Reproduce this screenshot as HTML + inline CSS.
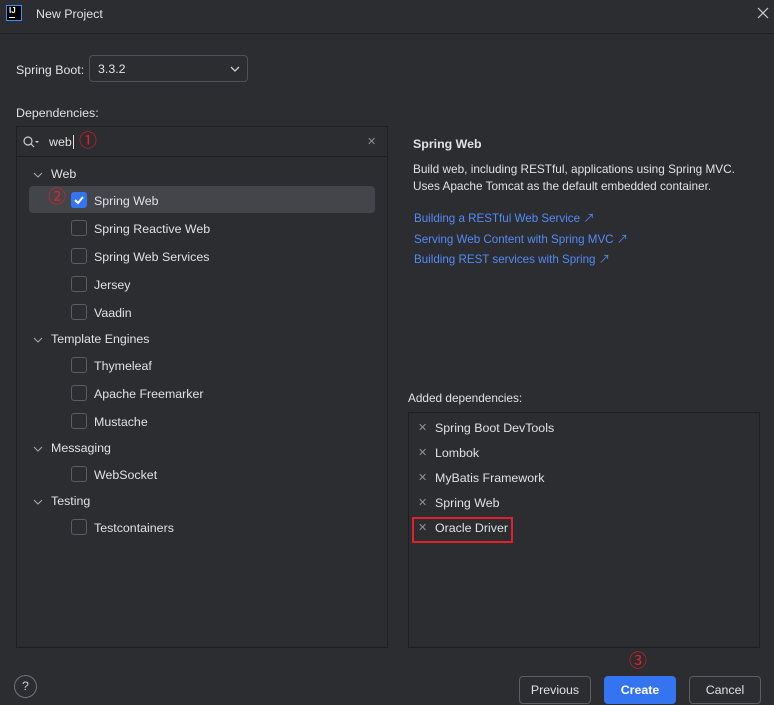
<!DOCTYPE html><html><head><style>
body{margin:0;width:774px;height:705px;background:#2b2d30;font-family:"Liberation Sans","Noto Sans CJK KR",sans-serif;font-size:12.4px;color:#dfe1e5;position:relative;overflow:hidden}
.a{position:absolute;white-space:nowrap}
.cb{position:absolute;width:14px;height:14px;border:1px solid #5a5d63;border-radius:3px;background:#2b2d30}
.link{color:#548af7;font-size:11.6px}
.btn{position:absolute;top:676px;width:70px;height:26px;border:1px solid #5a5d63;border-radius:4px;text-align:center;line-height:26px;font-size:12.4px}
.red{color:#e0202a;font-size:18px;line-height:18px}
.x{color:#8c8f94;font-size:11px}
</style></head><body>
<div class="a" style="left:6px;top:5px;width:16px;height:16px;background:#000;border:1px solid #3d8dff;box-sizing:border-box;color:#fff;font-size:8px;font-weight:bold;line-height:9px;padding-left:2px">IJ<div style="width:6px;height:1px;background:#fff;margin-top:2px"></div></div>
<div class="a" style="left:36px;top:7px">New Project</div>
<svg class="a" style="left:757px;top:7px" width="12" height="12"><path d="M1 1l10 10M11 1L1 11" stroke="#ccc" stroke-width="1.2"/></svg>
<div class="a" style="left:0;top:33px;width:774px;height:1px;background:#1e1f22"></div>
<div class="a" style="left:16px;top:63px">Spring Boot:</div>
<div class="a" style="left:89px;top:55px;width:159px;height:27px;border:1px solid #4e5157;border-radius:4px;box-sizing:border-box;background:#2b2d30"><span class="a" style="left:8px;top:6px">3.3.2</span><svg class="a" style="left:140px;top:10px" width="10" height="6"><path d="M1 1l4 4 4-4" stroke="#ccc" fill="none" stroke-width="1.3"/></svg></div>
<div class="a" style="left:16px;top:106px">Dependencies:</div>
<div class="a" style="left:16px;top:126px;width:372px;height:522px;border:1px solid #1e1f22;box-sizing:border-box;background:#2b2d30"></div>
<div class="a" style="left:17px;top:156px;width:370px;height:1px;background:#1e1f22"></div>
<svg class="a" style="left:23px;top:136px" width="18" height="12"><circle cx="5" cy="5" r="4" stroke="#ccc" fill="none" stroke-width="1.2"/><path d="M8 8l3 3" stroke="#ccc" stroke-width="1.2"/><path d="M12 5h4l-2 2z" fill="#ccc"/></svg>
<div class="a" style="left:49px;top:135px">web<span style="border-left:1px solid #ddd;margin-left:1px"></span></div>
<div class="a red" style="left:79px;top:132px">①</div>
<div class="a x" style="left:367px;top:135px">✕</div>
<div class="a" style="left:29px;top:186px;width:346px;height:27px;background:#43454a;border-radius:4px"></div>
<svg class="a" style="left:33px;top:172px" width="10" height="6"><path d="M1 1l4 4 4-4" stroke="#aaa" fill="none"/></svg>
<div class="a" style="left:51px;top:167px">Web</div>
<div class="a red" style="left:48px;top:188px">②</div>
<div class="a" style="left:71px;top:192px;width:16px;height:16px;background:#3574f0;border-radius:3px"><svg width="16" height="16"><path d="M4 8l3 3 5-6" stroke="#fff" stroke-width="2" fill="none"/></svg></div>
<div class="a" style="left:94px;top:194px">Spring Web</div>
<div class="cb" style="left:71px;top:220px"></div><div class="a" style="left:94px;top:222px">Spring Reactive Web</div>
<div class="cb" style="left:71px;top:248px"></div><div class="a" style="left:94px;top:250px">Spring Web Services</div>
<div class="cb" style="left:71px;top:276px"></div><div class="a" style="left:94px;top:278px">Jersey</div>
<div class="cb" style="left:71px;top:304px"></div><div class="a" style="left:94px;top:306px">Vaadin</div>
<svg class="a" style="left:33px;top:337px" width="10" height="6"><path d="M1 1l4 4 4-4" stroke="#aaa" fill="none"/></svg>
<div class="a" style="left:51px;top:332px">Template Engines</div>
<div class="cb" style="left:71px;top:357px"></div><div class="a" style="left:94px;top:359px">Thymeleaf</div>
<div class="cb" style="left:71px;top:385px"></div><div class="a" style="left:94px;top:387px">Apache Freemarker</div>
<div class="cb" style="left:71px;top:413px"></div><div class="a" style="left:94px;top:415px">Mustache</div>
<svg class="a" style="left:33px;top:446px" width="10" height="6"><path d="M1 1l4 4 4-4" stroke="#aaa" fill="none"/></svg>
<div class="a" style="left:51px;top:441px">Messaging</div>
<div class="cb" style="left:71px;top:466px"></div><div class="a" style="left:94px;top:468px">WebSocket</div>
<svg class="a" style="left:33px;top:499px" width="10" height="6"><path d="M1 1l4 4 4-4" stroke="#aaa" fill="none"/></svg>
<div class="a" style="left:51px;top:494px">Testing</div>
<div class="cb" style="left:71px;top:519px"></div><div class="a" style="left:94px;top:521px">Testcontainers</div>
<div class="a" style="left:413px;top:137px;font-weight:bold">Spring Web</div>
<div class="a" style="left:413px;top:161px;font-size:11.8px;line-height:17px">Build web, including RESTful, applications using Spring MVC.<br>Uses Apache Tomcat as the default embedded container.</div>
<div class="a link" style="left:414px;top:210px">Building a RESTful Web Service ↗</div>
<div class="a link" style="left:414px;top:231px">Serving Web Content with Spring MVC ↗</div>
<div class="a link" style="left:414px;top:251px">Building REST services with Spring ↗</div>
<div class="a" style="left:408px;top:391px;font-size:11.8px">Added dependencies:</div>
<div class="a" style="left:408px;top:412px;width:352px;height:236px;border:1px solid #1e1f22;box-sizing:border-box"></div>
<div class="a x" style="left:418px;top:421px">✕</div><div class="a" style="left:435px;top:421px">Spring Boot DevTools</div>
<div class="a x" style="left:418px;top:446px">✕</div><div class="a" style="left:435px;top:446px">Lombok</div>
<div class="a x" style="left:418px;top:471px">✕</div><div class="a" style="left:435px;top:471px">MyBatis Framework</div>
<div class="a x" style="left:418px;top:496px">✕</div><div class="a" style="left:435px;top:496px">Spring Web</div>
<div class="a x" style="left:418px;top:521px">✕</div><div class="a" style="left:435px;top:521px">Oracle Driver</div>
<div class="a" style="left:412px;top:517px;width:101px;height:26px;border:2px solid #e0202a;box-sizing:border-box"></div>
<div class="a" style="left:14px;top:675px;width:21px;height:21px;border:1px solid #6f737a;border-radius:50%;text-align:center;line-height:21px;color:#ccc">?</div>
<div class="a red" style="left:629px;top:652px">③</div>
<div class="btn" style="left:519px">Previous</div>
<div class="btn" style="left:604px;background:#3574f0;border-color:#3574f0;font-weight:bold;color:#fff">Create</div>
<div class="btn" style="left:689px">Cancel</div>
</body></html>
